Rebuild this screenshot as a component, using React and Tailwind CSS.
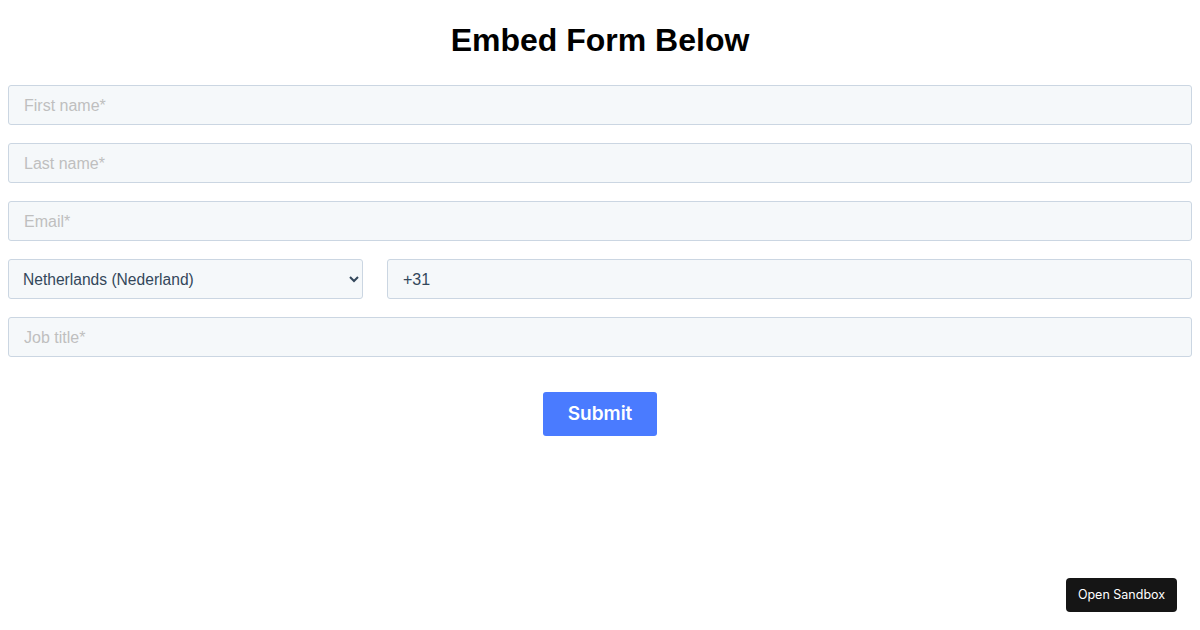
import React from "react";

const inputCls =
  "block w-full h-10 box-border rounded-[3px] border border-[#cbd6e2] bg-[#f5f8fa] px-[15px] pt-[2px] text-base text-[#33475b] placeholder:text-[#bfbfbf] outline-none";

export default function App() {
  return (
    <div className="min-h-[630px] bg-white px-2" style={{ fontFamily: '"Liberation Sans", Arial, sans-serif' }}>
      <h1 className="pt-[22px] text-center text-[32px] font-bold leading-[37px] text-black">Embed Form Below</h1>
      <form className="mt-[26px] flex flex-col gap-[18px]" onSubmit={(e) => e.preventDefault()}>
        <input className={inputCls} placeholder="First name*" />
        <input className={inputCls} placeholder="Last name*" />
        <input className={inputCls} placeholder="Email*" />
        <div className="flex gap-6">
          <select
            className="h-10 w-[355px] shrink-0 rounded-[3px] border border-[#cbd6e2] bg-[#f5f8fa] pl-[10px] pr-1 text-[15.6px] text-[#33475b] outline-none"
            defaultValue="nl"
          >
            <option value="nl">Netherlands (Nederland)</option>
          </select>
          <input className={inputCls} defaultValue="+31" />
        </div>
        <input className={inputCls} placeholder="Job title*" />
        <div className="mt-[17px] flex justify-center">
          <button
            type="submit"
            className="h-11 w-[114px] rounded-[3px] bg-[#4a7bff] text-[19px] font-semibold text-white"
            style={{ fontFamily: 'Inter, "Open Sans", sans-serif' }}
          >
            Submit
          </button>
        </div>
      </form>
      <div
        className="fixed bottom-[18px] right-[23px] flex h-[34px] w-[111px] items-center justify-center rounded-[4px] bg-[#151515] text-[12.5px] text-white"
        style={{ fontFamily: 'Inter, "Noto Sans", sans-serif' }}
      >
        Open Sandbox
      </div>
    </div>
  );
}
